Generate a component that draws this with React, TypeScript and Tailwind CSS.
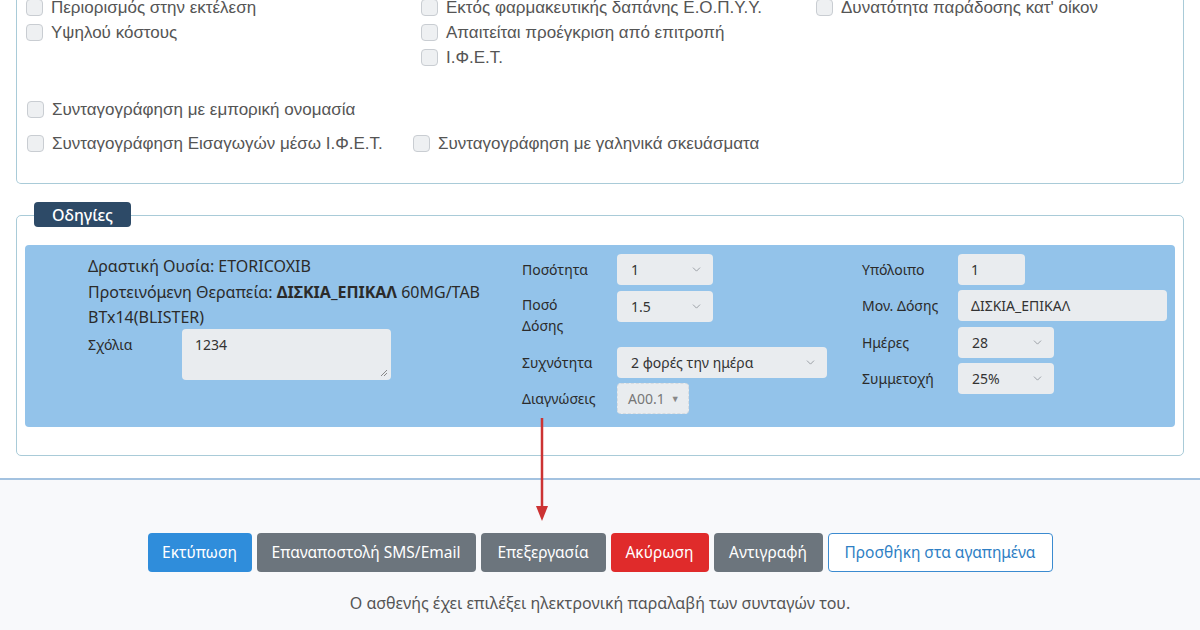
import { ChevronDown } from "lucide-react";

type CheckProps = { label: string };

function Check({ label }: CheckProps) {
  return (
    <label className="flex h-[25px] items-center gap-[8px] text-[17px] text-[#555]">
      <span className="h-[17px] w-[17px] shrink-0 rounded-[4px] border border-[#c9cdd2] bg-[#eef0f2]" />
      <span>{label}</span>
    </label>
  );
}

function Select({ value, width }: { value: string; width: string }) {
  return (
    <div
      className={`flex h-[31px] ${width} items-center justify-between rounded-[4px] bg-[#e9ecef] pl-[14px] pr-[10px] text-[14px] text-[#333]`}
    >
      <span>{value}</span>
      <ChevronDown className="h-[13px] w-[13px] text-[#8a8f95]" strokeWidth={1.5} />
    </div>
  );
}

function Input({ value, width }: { value: string; width: string }) {
  return (
    <div
      className={`flex h-[31px] ${width} items-center rounded-[4px] bg-[#e9ecef] pl-[13px] text-[14px] text-[#333]`}
    >
      {value}
    </div>
  );
}

const buttons = [
  { label: "Εκτύπωση", cls: "w-[104px] bg-[#2f8ddb] text-white" },
  { label: "Επαναποστολή SMS/Email", cls: "w-[219px] bg-[#6c757d] text-white" },
  { label: "Επεξεργασία", cls: "w-[125px] bg-[#6c757d] text-white" },
  { label: "Ακύρωση", cls: "w-[98px] bg-[#e02b2b] text-white" },
  { label: "Αντιγραφή", cls: "w-[109px] bg-[#6c757d] text-white" },
  {
    label: "Προσθήκη στα αγαπημένα",
    cls: "w-[225px] border border-[#3b8bd0] bg-white text-[#2f7fc4]",
  },
];

export default function App() {
  return (
    <div className="relative h-[630px] w-[1200px] overflow-hidden bg-white font-['Noto_Sans',sans-serif]">
      {/* checkbox fieldset, top edge scrolled off */}
      <div className="mx-4 -mt-[5px] h-[189px] rounded-b-[5px] border-x border-b border-[#a9cbd8] pl-[9px] font-['Liberation_Sans',sans-serif]">
        <div className="grid grid-cols-[395px_395px_1fr]">
          <div>
            <Check label="Περιορισμός στην εκτέλεση" />
            <Check label="Υψηλού κόστους" />
          </div>
          <div>
            <Check label="Εκτός φαρμακευτικής δαπάνης Ε.Ο.Π.Υ.Υ." />
            <Check label="Απαιτείται προέγκριση από επιτροπή" />
            <Check label="Ι.Φ.Ε.Τ." />
          </div>
          <div>
            <Check label="Δυνατότητα παράδοσης κατ' οίκον" />
          </div>
        </div>
        <div className="mt-[27px] pl-[1px]">
          <Check label="Συνταγογράφηση με εμπορική ονομασία" />
        </div>
        <div className="mt-[9px] flex pl-[1px]">
          <div className="w-[386px]">
            <Check label="Συνταγογράφηση Εισαγωγών μέσω Ι.Φ.Ε.Τ." />
          </div>
          <Check label="Συνταγογράφηση με γαληνικά σκευάσματα" />
        </div>
      </div>

      {/* instructions fieldset */}
      <div className="relative mx-4 mt-[31px] h-[241px] rounded-[5px] border border-[#a9cbd8] px-[8px] pt-[29px]">
        <div className="absolute left-[17px] top-[-14px] flex h-[25px] w-[97px] items-center justify-center rounded-[4px] bg-[#2d4a67] text-[16px] font-medium text-white">
          Οδηγίες
        </div>

        <div className="flex h-[182px] rounded-[4px] bg-[#93c3ea] pt-[9px] text-[16px] text-[#2b2b2b]">
          {/* left */}
          <div className="w-[497px] pl-[63px]">
            <div className="leading-[25.5px]">
              <div>Δραστική Ουσία: ETORICOXIB</div>
              <div>
                Προτεινόμενη Θεραπεία: <span className="font-bold">ΔΙΣΚΙΑ_ΕΠΙΚΑΛ</span> 60MG/TAB
                <br />
                BTx14(BLISTER)
              </div>
            </div>
            <div className="-mt-[2px] flex">
              <div className="w-[94px] pt-[5px] text-[14px]">Σχόλια</div>
              <div className="relative h-[51px] w-[209px] rounded-[4px] bg-[#e9ecef] px-[13px] pt-[5px] text-[14px] text-[#333]">
                1234
                <svg className="absolute bottom-[3px] right-[3px]" width="8" height="8" viewBox="0 0 8 8">
                  <path d="M7 1 1 7M7 4 4 7" stroke="#888" strokeWidth="1" />
                </svg>
              </div>
            </div>
          </div>

          {/* middle */}
          <div className="w-[340px] text-[14px]">
            <div className="flex items-center">
              <div className="w-[95px]">Ποσότητα</div>
              <Select value="1" width="w-[96px]" />
            </div>
            <div className="mt-[6px] flex items-start">
              <div className="w-[95px] pt-[3px] leading-[21px]">
                Ποσό
                <br />
                Δόσης
              </div>
              <Select value="1.5" width="w-[96px]" />
            </div>
            <div className="mt-[11px] flex items-center">
              <div className="w-[95px]">Συχνότητα</div>
              <Select value="2 φορές την ημέρα" width="w-[210px]" />
            </div>
            <div className="mt-[5px] flex items-center">
              <div className="w-[95px]">Διαγνώσεις</div>
              <div className="flex h-[31px] w-[72px] items-center gap-[6px] rounded-[4px] border border-dashed border-[#d6dbe0] bg-[#e9ecef] pl-[10px] text-[14px] text-[#777]">
                A00.1
                <span className="text-[9px] text-[#888]">▼</span>
              </div>
            </div>
          </div>

          {/* right */}
          <div className="text-[14px]">
            <div className="flex items-center">
              <div className="w-[96px]">Υπόλοιπο</div>
              <Input value="1" width="w-[67px]" />
            </div>
            <div className="mt-[5px] flex items-center">
              <div className="w-[96px]">Μον. Δόσης</div>
              <Input value="ΔΙΣΚΙΑ_ΕΠΙΚΑΛ" width="w-[209px]" />
            </div>
            <div className="mt-[6px] flex items-center">
              <div className="w-[96px]">Ημέρες</div>
              <Select value="28" width="w-[96px]" />
            </div>
            <div className="mt-[5px] flex items-center">
              <div className="w-[96px]">Συμμετοχή</div>
              <Select value="25%" width="w-[96px]" />
            </div>
          </div>
        </div>
      </div>

      {/* footer */}
      <div className="mt-[22px] h-[200px] border-t-2 border-[#a3c2e0] bg-[#f8f9fb] pt-[53px]">
        <div className="flex justify-center gap-[5px]">
          {buttons.map((b) => (
            <button
              key={b.label}
              className={`flex h-[39px] items-center justify-center rounded-[4px] text-[15.5px] ${b.cls}`}
            >
              {b.label}
            </button>
          ))}
        </div>
        <p className="mt-[19px] text-center text-[16px] text-[#555]">
          Ο ασθενής έχει επιλέξει ηλεκτρονική παραλαβή των συνταγών του.
        </p>
      </div>

      {/* red arrow annotation */}
      <svg className="absolute left-[534px] top-[418px]" width="16" height="104" viewBox="0 0 16 104">
        <line x1="8" y1="0" x2="8" y2="90" stroke="#cc3333" strokeWidth="2.5" />
        <path d="M2 88 L14 88 L8 103 Z" fill="#cc3333" />
      </svg>
    </div>
  );
}
